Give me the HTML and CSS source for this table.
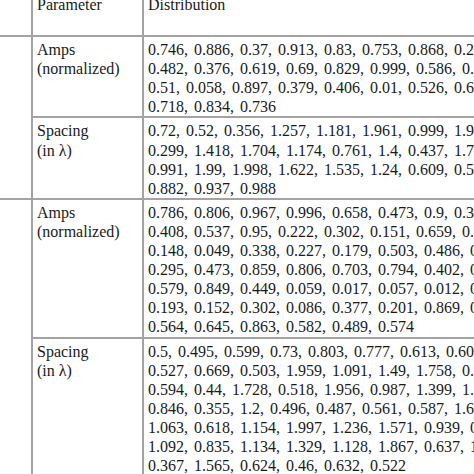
FILE: index.html
```html
<!DOCTYPE html>
<html>
<head>
<meta charset="utf-8">
<link rel="stylesheet" href="styles.css">
</head>
<body>
<div class="table">
  <div class="cell c1 head"></div>
  <div class="cell c2 head">Parameter</div>
  <div class="cell c3 head">Distribution</div>

  <div class="cell c1 group"></div>
  <div class="cell c2">Amps<br>(normalized)</div>
  <div class="cell c3">0.746, 0.886, 0.37, 0.913, 0.83, 0.753, 0.868, 0.281,<br>0.482, 0.376, 0.619, 0.69, 0.829, 0.999, 0.586, 0.514,<br>0.51, 0.058, 0.897, 0.379, 0.406, 0.01, 0.526, 0.634,<br>0.718, 0.834, 0.736</div>
  <div class="cell c2">Spacing<br>(in λ)</div>
  <div class="cell c3">0.72, 0.52, 0.356, 1.257, 1.181, 1.961, 0.999, 1.953,<br>0.299, 1.418, 1.704, 1.174, 0.761, 1.4, 0.437, 1.715,<br>0.991, 1.99, 1.998, 1.622, 1.535, 1.24, 0.609, 0.553,<br>0.882, 0.937, 0.988</div>

  <div class="cell c1 group last"></div>
  <div class="cell c2">Amps<br>(normalized)</div>
  <div class="cell c3">0.786, 0.806, 0.967, 0.996, 0.658, 0.473, 0.9, 0.342,<br>0.408, 0.537, 0.95, 0.222, 0.302, 0.151, 0.659, 0.411,<br>0.148, 0.049, 0.338, 0.227, 0.179, 0.503, 0.486, 0.622,<br>0.295, 0.473, 0.859, 0.806, 0.703, 0.794, 0.402, 0.713,<br>0.579, 0.849, 0.449, 0.059, 0.017, 0.057, 0.012, 0.381,<br>0.193, 0.152, 0.302, 0.086, 0.377, 0.201, 0.869, 0.455,<br>0.564, 0.645, 0.863, 0.582, 0.489, 0.574</div>
  <div class="cell c2 open">Spacing<br>(in λ)</div>
  <div class="cell c3 open">0.5, 0.495, 0.599, 0.73, 0.803, 0.777, 0.613, 0.605,<br>0.527, 0.669, 0.503, 1.959, 1.091, 1.49, 1.758, 0.817,<br>0.594, 0.44, 1.728, 0.518, 1.956, 0.987, 1.399, 1.243,<br>0.846, 0.355, 1.2, 0.496, 0.487, 0.561, 0.587, 1.642,<br>1.063, 0.618, 1.154, 1.997, 1.236, 1.571, 0.939, 0.718,<br>1.092, 0.835, 1.134, 1.329, 1.128, 1.867, 0.637, 1.305,<br>0.367, 1.565, 0.624, 0.46, 0.632, 0.522</div>
</div>
</body>
</html>
```
FILE: styles.css
```css
html, body {
  margin: 0;
  padding: 0;
  background: #ffffff;
  overflow: hidden;
  width: 474px;
  height: 474px;
}

.table {
  display: grid;
  grid-template-columns: 33px 111px 620px;
  margin-top: -8px;
  font-family: "Liberation Serif", "Times New Roman", serif;
  font-size: 16px;
  line-height: 19.1px;
  color: #1a1a1a;
}

.cell {
  box-sizing: border-box;
  padding: 3px 4px 0 4px;
  border-bottom: 2px solid #a3a3a3;
  white-space: nowrap;
}

.c1, .c2 {
  border-right: 2px solid #a3a3a3;
}

.c3 {
  word-spacing: 2px;
}

.head {
  padding-bottom: 21px;
  word-spacing: 0;
}

.group {
  grid-row: span 2;
}

.last, .open {
  border-bottom: none;
}
```
